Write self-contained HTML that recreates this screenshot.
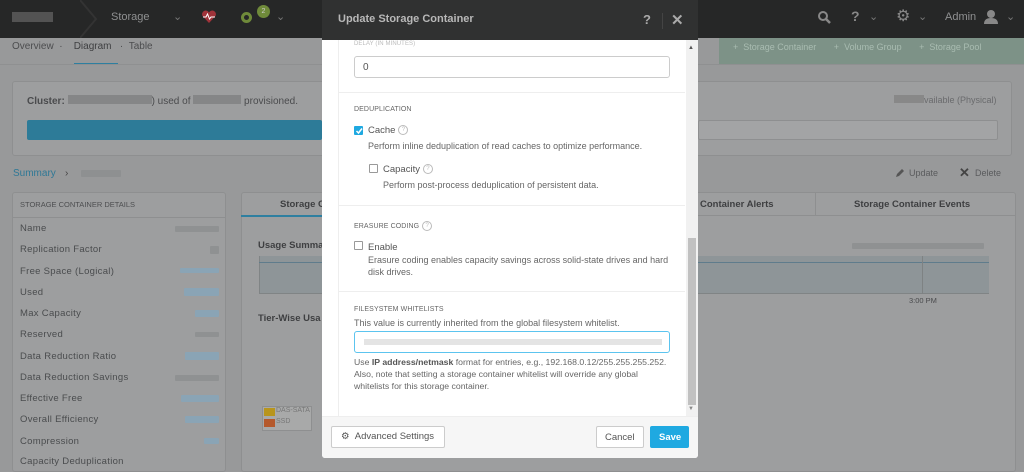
<!DOCTYPE html>
<html><head><meta charset="utf-8"><style>
*{box-sizing:border-box;margin:0;padding:0}
body{width:1024px;height:462px;overflow:hidden;background:#98999a;font-family:"Liberation Sans",sans-serif;position:relative;color:#555}
.abs{position:absolute}
.top{left:0;top:0;width:1024px;height:38px;background:#262727}
.t{position:absolute;font-size:11px}
.blur{position:absolute;background:#8c8d8f;opacity:.8;border-radius:1px}
.blurb{position:absolute;background:#8aa4b5;border-radius:1px}
.panel{position:absolute;background:#9d9e9f;border:1px solid #8e8f90;border-radius:3px}
.row{position:absolute;left:20px;font-size:9.5px;color:#4a4c4e;letter-spacing:.3px}
.modal{left:322px;top:0;width:376px;height:458px;background:#fff;border-radius:0 0 3px 3px}
.mh{left:0;top:0;width:376px;height:40px;background:#303131}
.m{position:absolute;font-size:9.5px;color:#666}
.lab{position:absolute;font-size:7px;color:#666;letter-spacing:.1px}
.cb{position:absolute;width:9px;height:9px;border:1px solid #999;border-radius:1px;background:#fff}
.q{display:inline-block;width:10px;height:10px;border:1px solid #bbb;border-radius:50%;font-size:6px;text-align:center;line-height:9px;color:#bbb;vertical-align:middle;margin-left:3px}
</style></head><body>
<div class="abs top"></div>
<div class="abs" style="left:12px;top:12px;width:41px;height:10px;background:#666;opacity:.7"></div>
<svg class="abs" style="left:80px;top:0" width="20" height="38"><path d="M0 0 L16 19 L0 38" fill="none" stroke="#333" stroke-width="2"/></svg>
<div class="t" style="left:111px;top:11px;color:#8f9091;font-size:11px">Storage</div>
<div class="t" style="left:173px;top:10px;color:#777">⌄</div>
<svg class="abs" style="left:201px;top:10px" width="16" height="14"><path d="M8 13 L1.5 6 A3.5 3.5 0 0 1 8 2.5 A3.5 3.5 0 0 1 14.5 6 Z" fill="#a0333a"/><path d="M2 7 H5 L6.5 4 L8.5 9 L10 7 H14" stroke="#fff" fill="none" stroke-width="1"/></svg>
<div class="abs" style="left:241px;top:12px;width:11px;height:11px;border:3px solid #6f8a3a;border-radius:50%"></div>
<div class="abs" style="left:257px;top:5px;width:13px;height:13px;background:#6f8a3a;border-radius:50%;font-size:7px;color:#ccc;text-align:center;line-height:13px">2</div>
<div class="t" style="left:276px;top:10px;color:#777">⌄</div>
<svg class="abs" style="left:817px;top:10px" width="14" height="14"><circle cx="6" cy="6" r="4" stroke="#888" stroke-width="2" fill="none"/><path d="M9 9 L13 13" stroke="#888" stroke-width="2.5"/></svg>
<div class="t" style="left:851px;top:8px;color:#888;font-size:14px;font-weight:bold">?</div>
<div class="t" style="left:869px;top:10px;color:#777">⌄</div>
<div class="t" style="left:896px;top:6px;color:#888;font-size:16px">⚙</div>
<div class="t" style="left:918px;top:10px;color:#777">⌄</div>
<div class="t" style="left:945px;top:11px;color:#8f9091">Admin</div>
<svg class="abs" style="left:984px;top:9px" width="14" height="16"><circle cx="7" cy="5" r="4" fill="#888"/><path d="M0 15 Q0 9 7 9 Q14 9 14 15 Z" fill="#888"/></svg>
<div class="t" style="left:1006px;top:10px;color:#777">⌄</div>

<div class="t" style="left:12px;top:41px;font-size:10px;color:#4c4d4f">Overview &nbsp;·&nbsp; &nbsp; <span style="color:#3e3f41">Diagram</span> &nbsp; · &nbsp;Table</div>
<div class="abs" style="left:74px;top:63px;width:44px;height:2px;background:#2e7fa0"></div>
<div class="abs" style="left:0;top:64px;width:1024px;height:1px;background:#8f9091"></div>
<div class="abs" style="left:719px;top:38px;width:305px;height:26px;background:#7d9287"></div>
<div class="t" style="left:733px;top:42px;font-size:9px;color:#a9bcb1">+ &nbsp;Storage Container &nbsp; &nbsp; &nbsp; + &nbsp;Volume Group &nbsp; &nbsp; &nbsp; + &nbsp;Storage Pool</div>

<div class="panel" style="left:12px;top:81px;width:1000px;height:75px"></div>
<div class="t" style="left:27px;top:95px;font-size:10px;color:#4a4b4d"><b>Cluster:</b> <span style="display:inline-block;width:84px;height:9px;background:#858687"></span>) used of <span style="display:inline-block;width:48px;height:9px;background:#858687"></span> provisioned.</div>
<div class="abs" style="left:27px;top:120px;width:295px;height:20px;background:#2d7b98;border-radius:2px"></div>
<div class="abs" style="left:698px;top:120px;width:300px;height:20px;background:#a3a4a5;border:1px solid #8e8f90;border-radius:2px"></div>
<div class="t" style="left:894px;top:95px;font-size:9px;color:#6a6b6d"><span style="display:inline-block;width:30px;height:8px;background:#888"></span>vailable (Physical)</div>

<div class="t" style="left:13px;top:168px;font-size:10px;color:#2f7896">Summary</div>
<div class="t" style="left:65px;top:168px;font-size:10px;color:#444">›</div>
<div class="blur" style="left:81px;top:170px;width:40px;height:7px"></div>
<svg class="abs" style="left:895px;top:168px" width="10" height="10"><path d="M1 9 L2 6 L7 1 L9 3 L4 8 Z" fill="#555"/></svg>
<div class="t" style="left:909px;top:168px;font-size:9px;color:#5a5b5d">Update</div>
<div class="t" style="left:959px;top:165px;font-size:13px;color:#444;font-weight:bold">✕</div>
<div class="t" style="left:975px;top:168px;font-size:9px;color:#5a5b5d">Delete</div>

<div class="panel" style="left:12px;top:192px;width:214px;height:280px"></div>
<div class="abs" style="left:12px;top:217px;width:214px;height:1px;background:#8e8f90"></div>
<div class="t" style="left:20px;top:200px;font-size:7.5px;color:#4d4e50">STORAGE CONTAINER DETAILS</div>
<div class="row" style="top:223px">Name</div>
<div class="row" style="top:244px">Replication Factor</div>
<div class="row" style="top:266px">Free Space (Logical)</div>
<div class="row" style="top:287px">Used</div>
<div class="row" style="top:308px">Max Capacity</div>
<div class="row" style="top:329px">Reserved</div>
<div class="row" style="top:351px">Data Reduction Ratio</div>
<div class="row" style="top:372px">Data Reduction Savings</div>
<div class="row" style="top:393px">Effective Free</div>
<div class="row" style="top:414px">Overall Efficiency</div>
<div class="row" style="top:436px">Compression</div>
<div class="row" style="top:456px">Capacity Deduplication</div>
<div class="blur" style="left:175px;top:226px;width:44px;height:6px"></div>
<div class="blur" style="left:210px;top:246px;width:9px;height:8px"></div>
<div class="blurb" style="left:180px;top:268px;width:39px;height:5px"></div>
<div class="blurb" style="left:184px;top:288px;width:35px;height:8px"></div>
<div class="blurb" style="left:195px;top:310px;width:24px;height:7px"></div>
<div class="blur" style="left:195px;top:332px;width:24px;height:5px"></div>
<div class="blurb" style="left:185px;top:352px;width:34px;height:8px"></div>
<div class="blur" style="left:175px;top:375px;width:44px;height:6px"></div>
<div class="blurb" style="left:181px;top:395px;width:38px;height:7px"></div>
<div class="blurb" style="left:185px;top:416px;width:34px;height:7px"></div>
<div class="blurb" style="left:204px;top:438px;width:15px;height:6px"></div>

<div class="panel" style="left:241px;top:192px;width:775px;height:280px"></div>
<div class="abs" style="left:241px;top:215px;width:775px;height:1px;background:#8e8f90"></div>
<div class="abs" style="left:241px;top:215px;width:90px;height:2px;background:#2e7fa0"></div>
<div class="t" style="left:280px;top:199px;font-size:9.5px;color:#3e3f41;font-weight:bold">Storage C</div>
<div class="t" style="left:700px;top:199px;font-size:9.5px;color:#3e3f41;font-weight:bold">Container Alerts</div>
<div class="abs" style="left:815px;top:192px;width:1px;height:24px;background:#8e8f90"></div>
<div class="t" style="left:854px;top:199px;font-size:9.5px;color:#3e3f41;font-weight:bold">Storage Container Events</div>
<div class="t" style="left:258px;top:240px;font-size:9.5px;color:#3e3f41;font-weight:bold">Usage Summa</div>
<div class="abs" style="left:259px;top:256px;width:730px;height:38px;background:#8e9598;border-left:1px solid #808485;border-bottom:1px solid #808485"></div>
<div class="abs" style="left:259px;top:262px;width:730px;height:1px;background:#5f7c8c"></div>
<div class="abs" style="left:922px;top:256px;width:1px;height:38px;background:#7e8283"></div>
<div class="blur" style="left:852px;top:243px;width:132px;height:6px"></div>
<div class="t" style="left:909px;top:296px;font-size:7.5px;color:#4a4b4d">3:00 PM</div>
<div class="t" style="left:258px;top:313px;font-size:9.5px;color:#3e3f41;font-weight:bold">Tier-Wise Usa</div>
<div class="abs" style="left:262px;top:406px;width:50px;height:25px;background:#a8a9a9;border:1px solid #8e8f90"></div>
<div class="abs" style="left:264px;top:408px;width:11px;height:8px;background:#b8951d"></div>
<div class="abs" style="left:264px;top:419px;width:11px;height:8px;background:#b5592c"></div>
<div class="t" style="left:276px;top:407px;font-size:7px;color:#777">DAS-SATA</div>
<div class="t" style="left:276px;top:418px;font-size:7px;color:#777">SSD</div>

<div class="abs modal">
 <div class="abs mh"></div>
 <div class="t" style="left:16px;top:13px;font-size:11px;color:#b8b8b8;font-weight:bold">Update Storage Container</div>
 <div class="t" style="left:321px;top:12px;font-size:13px;color:#aaa;font-weight:bold">?</div>
 <div class="abs" style="left:340px;top:13px;width:1px;height:16px;background:#444"></div>
 <div class="t" style="left:349px;top:11px;font-size:15px;color:#aaa;font-weight:bold">✕</div>
 <div class="abs" style="left:16px;top:40px;width:1px;height:376px;background:#eee"></div>
 <div class="abs" style="left:364px;top:40px;width:12px;height:376px;background:#f1f1f1"></div>
 <div class="abs" style="left:366px;top:238px;width:8px;height:167px;background:#c1c1c1"></div>
 <div class="t" style="left:366px;top:45px;font-size:6px;color:#555">▲</div>
 <div class="t" style="left:366px;top:406px;font-size:6px;color:#888">▼</div>
 <div class="lab" style="left:32px;top:41px;color:#bbb;font-size:6px">DELAY (IN MINUTES)</div>
 <div class="abs" style="left:32px;top:56px;width:316px;height:22px;border:1px solid #ccc;border-radius:3px"></div>
 <div class="m" style="left:41px;top:62px;font-size:10px;color:#555">0</div>
 <div class="abs" style="left:17px;top:92px;width:346px;height:1px;background:#eee"></div>
 <div class="lab" style="left:32px;top:106px">DEDUPLICATION</div>
 <div class="cb" style="left:32px;top:126px;background:#1fa9e1;border-color:#1fa9e1"></div>
 <svg class="abs" style="left:33px;top:127px" width="8" height="8"><path d="M1.5 4 L3.5 6 L7 1.5" stroke="#fff" stroke-width="1.5" fill="none"/></svg>
 <div class="m" style="left:46px;top:125px;color:#555">Cache<span class="q">?</span></div>
 <div class="m" style="left:46px;top:141px;font-size:9px">Perform inline deduplication of read caches to optimize performance.</div>
 <div class="cb" style="left:47px;top:164px"></div>
 <div class="m" style="left:61px;top:164px;color:#555">Capacity<span class="q">?</span></div>
 <div class="m" style="left:61px;top:180px;font-size:9px">Perform post-process deduplication of persistent data.</div>
 <div class="abs" style="left:17px;top:205px;width:346px;height:1px;background:#eee"></div>
 <div class="lab" style="left:32px;top:221px">ERASURE CODING<span class="q">?</span></div>
 <div class="cb" style="left:32px;top:241px"></div>
 <div class="m" style="left:46px;top:242px;color:#555">Enable</div>
 <div class="m" style="left:46px;top:254px;font-size:9px;line-height:12px;width:305px">Erasure coding enables capacity savings across solid-state drives and hard disk drives.</div>
 <div class="abs" style="left:17px;top:291px;width:346px;height:1px;background:#eee"></div>
 <div class="lab" style="left:32px;top:306px">FILESYSTEM WHITELISTS</div>
 <div class="m" style="left:32px;top:318px;font-size:9px">This value is currently inherited from the global filesystem whitelist.</div>
 <div class="abs" style="left:32px;top:331px;width:316px;height:22px;border:1px solid #5cc4ef;border-radius:3px"></div>
 <div class="abs" style="left:42px;top:339px;width:298px;height:6px;background:#ddd;opacity:.8"></div>
 <div class="m" style="left:32px;top:356px;font-size:8.7px;line-height:12px;width:340px;white-space:nowrap">Use <b style="color:#555">IP address/netmask</b> format for entries, e.g., 192.168.0.12/255.255.255.252.<br>Also, note that setting a storage container whitelist will override any global<br>whitelists for this storage container.</div>
 <div class="abs" style="left:0;top:416px;width:376px;height:42px;background:#f6f6f6;border-top:1px solid #eee;border-radius:0 0 3px 3px"></div>
 <div class="abs" style="left:9px;top:426px;width:114px;height:22px;border:1px solid #ccc;background:#fff;border-radius:2px"></div>
 <div class="m" style="left:19px;top:431px;color:#555;font-size:9.5px">⚙ &nbsp;Advanced Settings</div>
 <div class="abs" style="left:274px;top:426px;width:48px;height:22px;border:1px solid #ccc;background:#fff;border-radius:2px"></div>
 <div class="m" style="left:283px;top:432px;color:#555">Cancel</div>
 <div class="abs" style="left:328px;top:426px;width:39px;height:22px;background:#1fa9e1;border-radius:2px"></div>
 <div class="m" style="left:337px;top:432px;color:#fff;font-weight:bold">Save</div>
</div>
</body></html>
